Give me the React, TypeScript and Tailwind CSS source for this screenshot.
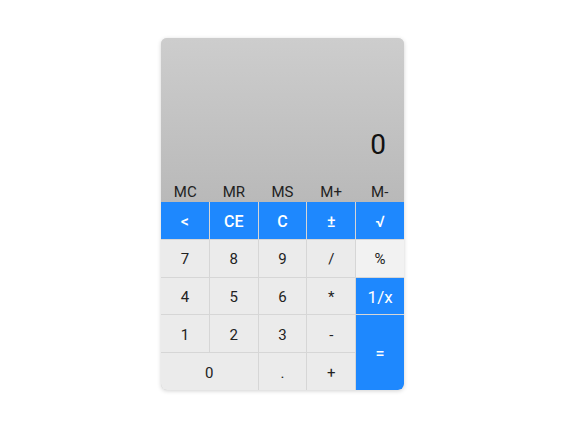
import React from "react";

const font = { fontFamily: "Roboto, 'Liberation Sans', sans-serif" };

type Key = { label: string; cls?: string };

const blue = "bg-[#1e88fe] text-white font-medium text-[16px]";

const rows: Key[] = [
  { label: "<", cls: blue },
  { label: "CE", cls: blue },
  { label: "C", cls: blue },
  { label: "±", cls: blue },
  { label: "√", cls: blue },
  { label: "7" },
  { label: "8" },
  { label: "9" },
  { label: "/" },
  { label: "%", cls: "bg-[#f2f2f2] text-[#222]" },
  { label: "4" },
  { label: "5" },
  { label: "6" },
  { label: "*" },
  { label: "1/x", cls: "bg-[#1e88fe] text-white text-[17px]" },
  { label: "1" },
  { label: "2" },
  { label: "3" },
  { label: "-" },
  { label: "=", cls: blue + " row-span-2 rounded-br-[6px]" },
  { label: "0", cls: "bg-[#ebebeb] text-[#222] col-span-2 rounded-bl-[6px]" },
  { label: "." },
  { label: "+" },
];

export default function App() {
  return (
    <div className="min-h-screen bg-white pt-[38px] pl-[161px]" style={font}>
      <div className="w-[243px] h-[352px] rounded-[6px] shadow-[0_1px_4px_rgba(0,0,0,0.18)] bg-[#d6d6d6] flex flex-col overflow-hidden">
        <div className="h-[164px] bg-gradient-to-b from-[#cdcdcd] to-[#b9b9b9] flex flex-col">
          <div className="flex-1 flex items-end justify-end pr-[18px] pb-[20px] text-[28px] text-[#111] leading-none">
            0
          </div>
          <div className="h-[23px] grid grid-cols-5 text-[15px] text-[#222] items-center pt-[2px]">
            {["MC", "MR", "MS", "M+", "M-"].map((m) => (
              <div key={m} className="text-center">
                {m}
              </div>
            ))}
          </div>
        </div>
        <div className="h-[188px] grid grid-cols-5 grid-rows-5 gap-px">
          {rows.map((k) => (
            <button
              key={k.label}
              className={
                "flex items-center justify-center pt-[3px] text-[15px] " +
                (k.cls ?? "bg-[#ebebeb] text-[#222]")
              }
            >
              {k.label}
            </button>
          ))}
        </div>
      </div>
    </div>
  );
}
